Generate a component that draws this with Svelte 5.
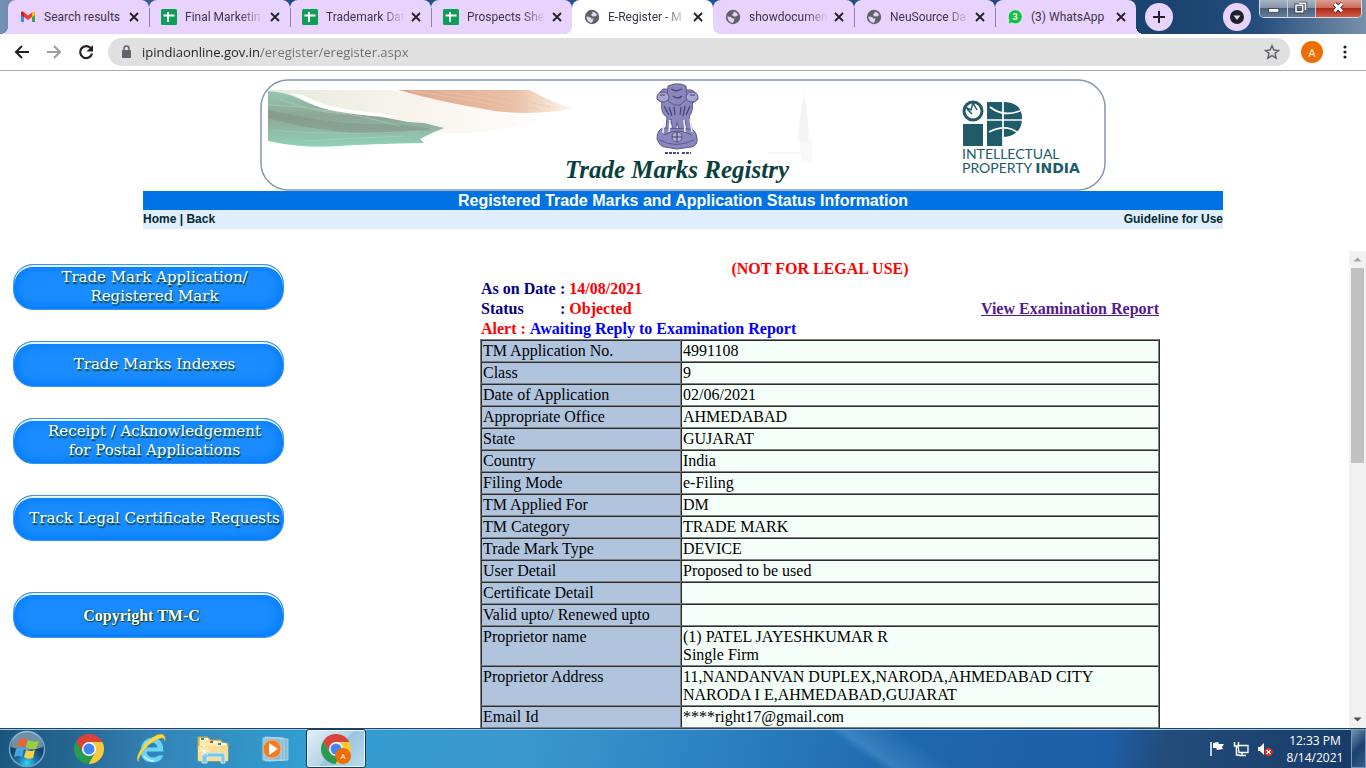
<script>
	const tabs = [
		{ title: 'Search results', icon: 'gmail' },
		{ title: 'Final Marketin', icon: 'sheet', fade: true },
		{ title: 'Trademark Dat', icon: 'sheet', fade: true },
		{ title: 'Prospects She', icon: 'sheet', fade: true },
		{ title: 'E-Register - M', icon: 'globe', fade: true, active: true },
		{ title: 'showdocumen', icon: 'globe', fade: true },
		{ title: 'NeuSource Da', icon: 'globe', fade: true },
		{ title: '(3) WhatsApp', icon: 'whatsapp' }
	];

	const menu = [
		['Trade Mark Application/', 'Registered Mark'],
		['Trade Marks Indexes'],
		['Receipt / Acknowledgement', 'for Postal Applications'],
		['Track Legal Certificate Requests']
	];

	const rows = [
		['TM Application No.', '4991108'],
		['Class', '9'],
		['Date of Application', '02/06/2021'],
		['Appropriate Office', 'AHMEDABAD'],
		['State', 'GUJARAT'],
		['Country', 'India'],
		['Filing Mode', 'e-Filing'],
		['TM Applied For', 'DM'],
		['TM Category', 'TRADE MARK'],
		['Trade Mark Type', 'DEVICE'],
		['User Detail', 'Proposed to be used'],
		['Certificate Detail', ''],
		['Valid upto/ Renewed upto', ''],
		['Proprietor name', '(1) PATEL JAYESHKUMAR R\nSingle Firm'],
		['Proprietor Address', '11,NANDANVAN DUPLEX,NARODA,AHMEDABAD CITY\nNARODA I E,AHMEDABAD,GUJARAT'],
		['Email Id', '****right17@gmail.com']
	];

	let url = 'ipindiaonline.gov.in/eregister/eregister.aspx';
</script>

{#snippet chromeLogo()}
	<path d="M15 8H28.300A15 15 0 0 0 2 7.500L8.900 18.500Z" fill="#d8433a" />
	<path d="M21 18.500L14.500 30A15 15 0 0 0 28.300 8H15Z" fill="#fbc93d" />
	<path d="M8.900 18.500L2 7.500A15 15 0 0 0 14.500 30L21 18.500Z" fill="#2a9a4f" />
	<circle cx="15" cy="15" r="7" fill="#fff" />
	<circle cx="15" cy="15" r="5.500" fill="#4285f4" />
{/snippet}

<div class="screen">
	<header class="tabstrip">
		{#each tabs as tab}
			<div class="tab" class:active={tab.active}>
				<svg class="favicon" viewBox="0 0 16 16">
					{#if tab.icon === 'gmail'}
						<path d="M1 3v10h3V7z" fill="#4285f4" />
						<path d="M15 3v10h-3V7z" fill="#34a853" />
						<path d="M1 4.500Q1 2 3 2.500L8 6.500 12 3.500V8L8 11 1 6z" fill="#ea4335" />
						<path d="M12 3.500Q15 1 15 4.500V6L12 8.200z" fill="#fbbc04" />
						<path d="M1 4.500Q1 3 2.500 2.500L4 4V8.200L1 6z" fill="#c5221f" />
					{:else if tab.icon === 'sheet'}
						<rect width="16" height="16" rx="1.500" fill="#0f9d58" />
						<path d="M7 3v10M2.500 6.500h11" stroke="#fff" stroke-width="2" />
					{:else if tab.icon === 'globe'}
						<circle cx="8" cy="8" r="7.200" fill="#5f6368" />
						<path d="M8.500 2.400Q12 3 13.200 6L11 7.500 8 7.200 7 5.500 8.500 4.500z" fill="#e3d5f2" />
						<path d="M2.300 7.500L6 8l1.500 1.500h2L9 12l-1.500 2Q3 13 2.300 7.500z" fill="#e3d5f2" />
					{:else}
						<path d="M1 15l1-4A7 7 0 1 1 5 14z" fill="#14c143" stroke="#fff" stroke-width=".6" />
						<text x="8" y="11" text-anchor="middle" fill="#fff" font-size="9" font-weight="700">3</text>
					{/if}
				</svg>
				<span class="title" class:fade={tab.fade}>{tab.title}</span>
				<button class="close" aria-label="Close tab">
					<svg viewBox="0 0 10 10"><path d="M1 1l8 8M9 1l-8 8" stroke="#202124" stroke-width="1.800" /></svg>
				</button>
			</div>
		{/each}
		<button class="round" aria-label="New tab">
			<svg viewBox="0 0 28 28"><path d="M14 8v12M8 14h12" stroke="#202124" stroke-width="2" /></svg>
		</button>
		<button class="round search" aria-label="Search tabs">
			<svg viewBox="0 0 28 28"><circle cx="14" cy="14" r="7" fill="#202124" /><path d="M10.500 12.500h7L14 17z" fill="#e8d3ff" /></svg>
		</button>
		<div class="controls">
			<button aria-label="Minimize">
				<svg viewBox="0 0 28 18"><rect x="9" y="9" width="11" height="4" fill="#fff" stroke="#454b57" /></svg>
			</button>
			<button aria-label="Restore">
				<svg viewBox="0 0 28 18"><path d="M11.500 3.500h7v7M8.500 5.500h7v7h-7z" fill="none" stroke="#3b4250" stroke-width="3.500" /><path d="M11.500 3.500h7v7M8.500 5.500h7v7h-7z" fill="none" stroke="#fff" stroke-width="1.700" /></svg>
			</button>
			<button class="exit" aria-label="Close window">
				<svg viewBox="0 0 28 18"><path d="M10 4l8 8M18 4l-8 8" stroke="#60302c" stroke-width="5" /><path d="M10 4l8 8M18 4l-8 8" stroke="#fff" stroke-width="3" /></svg>
			</button>
		</div>
	</header>

	<nav class="toolbar">
		<button class="tool" aria-label="Back">
			<svg viewBox="0 0 20 20"><path d="M17 10H4M10 4l-6 6 6 6" fill="none" stroke="#202124" stroke-width="2" /></svg>
		</button>
		<button class="tool" aria-label="Forward">
			<svg viewBox="0 0 20 20"><path d="M3 10h13M10 4l6 6-6 6" fill="none" stroke="#9b9da0" stroke-width="2" /></svg>
		</button>
		<button class="tool" aria-label="Reload">
			<svg viewBox="0 0 20 20"><path d="M15 6.500A6 6 0 1 0 16 11.500" fill="none" stroke="#202124" stroke-width="2.200" /><path d="M17 3v6.500h-6.500z" fill="#202124" /></svg>
		</button>
		<div class="address">
			<svg class="lock" viewBox="0 0 16 16"><rect x="4" y="6" width="9" height="8" rx="1" fill="#5f6368" /><path d="M6 6V4.500a2.500 2.500 0 0 1 5 0V6" fill="none" stroke="#5f6368" stroke-width="1.500" /></svg>
			<input type="text" aria-label="Address" bind:value={url} />
			<button class="star" aria-label="Bookmark this page">
				<svg viewBox="0 0 16 16"><path d="M8 1.800l1.900 4.300 4.600.400-3.500 3 1.100 4.600L8 11.600l-4.100 2.500L5 9.500l-3.500-3 4.600-.400z" fill="none" stroke="#5f6368" stroke-width="1.500" /></svg>
			</button>
		</div>
		<button class="avatar" aria-label="Profile">A</button>
		<button class="tool dots" aria-label="Menu">
			<svg viewBox="0 0 20 20" fill="#202124"><circle cx="10" cy="5" r="1.600" /><circle cx="10" cy="10" r="1.600" /><circle cx="10" cy="15" r="1.600" /></svg>
		</button>
	</nav>

	<div class="page">
		<div class="masthead">
			<svg class="banner" viewBox="0 0 846 112" role="img" aria-label="Trade Marks Registry, Intellectual Property India">
				<defs>
					<linearGradient id="saffron"><stop offset="0" stop-color="#dda68b" /><stop offset=".65" stop-color="#e9bfa5" /><stop offset="1" stop-color="#fff8ee" /></linearGradient>
					<linearGradient id="cream"><stop offset="0" stop-color="#e6eadd" /><stop offset=".5" stop-color="#f8f4ec" /><stop offset="1" stop-color="#fff" /></linearGradient>
					<linearGradient id="green" x2="0" y2="1"><stop offset="0" stop-color="#93c9b0" /><stop offset=".45" stop-color="#8da595" /><stop offset="1" stop-color="#8fd2b9" /></linearGradient>
				</defs>
				<rect x="1" y="1" width="844" height="110" rx="27" fill="#fff" stroke="#8497b4" stroke-width="1.500" />
				<path d="M8 11H130Q190 24 300 39L240 51Q190 58 165 50L150 45Q70 45 8 12z" fill="url(#cream)" />
				<path d="M138 11H270Q294 25 314 29Q278 37 235 32Q180 23 138 11z" fill="url(#saffron)" />
				<path d="M8 12Q25 13 43 21Q80 35 122 38L148 43 164 44 184 49 172 54 160 60 164 64Q105 65 80 67Q45 70 8 62z" fill="url(#green)" />
				<path d="M8 31Q70 45 110 45T172 50Q120 58 75 52Q40 48 8 39z" fill="#84958b" opacity=".6" />
				<path d="M8 26Q70 28 140 47M12 51Q72 57 160 52M45 62Q95 59 145 57M20 20Q60 35 90 35" fill="none" stroke="#b8d6c7" stroke-width="1.200" opacity=".5" />
				<path d="M43 16Q70 31 120 34L142 38Q90 37 62 29Q46 24 30 14z" fill="#fff" />
				<path d="M150 12Q205 19 248 29M180 12Q230 19 278 30M216 12Q250 18 290 28" fill="none" stroke="#eac8b2" opacity=".7" />

				<g fill="#8b86bb" stroke="#5b568f" stroke-width="1">
					<path d="M403 10Q398 14 397 20l7 5 26 1 8-6q-1-7-7-9z" />
					<path d="M402 21Q400 35 407 38L406 49 402 59 407 57 411 40 414 59 417 43 421 59 425 41 428 58 434 57 429 38Q434 31 432 20z" />
					<path d="M408 7l6-2h7l5 2 1 13-7 6h-6l-7-5z" />
					<ellipse cx="403" cy="18" rx="6" ry="5" fill="#aaa6cb" />
					<ellipse cx="432" cy="18" rx="6" ry="5" fill="#aaa6cb" />
					<path d="M403 49Q397 51 397 60q3 8 8 8l12 2 14-2q7-1 6-9-1-8-7-9z" />
					<path d="M404 56Q417 48 432 56M400 61Q415 70 434 61" fill="none" />
					<circle cx="417" cy="58" r="5" fill="#b6b3d2" />
				</g>
				<path d="M411 10l5 2 6-2M413 17q5 4 9 0M404 27l5 9M409 28l3 9M414 28l1 8M421 28l-1 8M425 27l-2 10M430 27l-4 9M417 53v10M412 58h10M400 16h5M430 16h5" fill="none" stroke="#454078" stroke-width="1.200" />
				<path d="M404 40l-1 14M410 41l-1 12M424 41l1 12M430 40l2 13" stroke="#f3f2fa" stroke-width="1.500" />
				<path d="M405 74h14M422 74h9" stroke="#514c85" stroke-width="2" stroke-dasharray="3 1" />
				<g fill="#f0f0f0" opacity=".7">
					<path d="M541 31l3-18 3 18 2 31h-11z" />
					<path d="M508 73h32V61h12v22h-11v-8h-33z" opacity=".6" />
				</g>
				<text class="registry" x="417" y="99" text-anchor="middle">Trade Marks Registry</text>

				<g fill="#205b69">
					<rect x="703" y="45" width="20" height="22" />
					<path d="M727 23h16q19 0 19 16 0 18-19 19v9h-16z" />
				</g>
				<circle cx="713" cy="32" r="9" fill="#fff" stroke="#205b69" stroke-width="3" />
				<path d="M705 28l6 3 2-7 4 7M707 30l5 5" fill="none" stroke="#205b69" stroke-width="1.500" />
				<path d="M743 23v44M727 41h35M730 28q14 11 32 3M729 53q18-9 30 2" fill="none" stroke="#fff" stroke-width="1.700" />
				<text class="ip" x="702" y="80">INTELLECTUAL</text>
				<text class="ip" x="702" y="94">PROPERTY <tspan class="heavy">INDIA</tspan></text>
			</svg>
			<h1>Registered Trade Marks and Application Status Information</h1>
			<div class="links">
				<span><a href="#home">Home</a> | <a href="#back">Back</a></span>
				<a href="#guide">Guideline for Use</a>
			</div>
		</div>

		<div class="frames">
			<aside>
				{#each menu as lines}
					<button class="pill">
						{#each lines as line}<span>{line}</span>{/each}
					</button>
				{/each}
				<button class="pill copyright">Copyright TM-C</button>
			</aside>

			<main>
				<div class="report">
					<p class="legal">(NOT FOR LEGAL USE)</p>
					<p><span class="key">As on Date</span>: <b>14/08/2021</b></p>
					<p>
						<span class="key">Status</span>: <b>Objected</b>
						<a class="exam" href="#report">View Examination Report</a>
					</p>
					<p class="alert"><b>Alert :</b> Awaiting Reply to Examination Report</p>
					<table>
						<tbody>
							{#each rows as [label, value]}
								<tr>
									<th scope="row">{label}</th>
									<td>{value}</td>
								</tr>
							{/each}
						</tbody>
					</table>
				</div>
			</main>

			<div class="scrollbar">
				<button aria-label="Scroll up"><svg viewBox="0 0 17 17"><path d="M4.500 10.500h8l-4-4z" fill="#a3a3a3" /></svg></button>
				<div class="thumb"></div>
				<button aria-label="Scroll down"><svg viewBox="0 0 17 17"><path d="M4.500 6.500h8l-4 4z" fill="#505050" /></svg></button>
			</div>
		</div>
	</div>

	<footer class="taskbar">
		<button class="orb" aria-label="Start">
			<svg viewBox="0 0 38 38">
				<defs>
					<radialGradient id="orb" cy=".9"><stop offset="0" stop-color="#31d6f5" /><stop offset=".5" stop-color="#1c78ab" /><stop offset="1" stop-color="#194467" /></radialGradient>
				</defs>
				<circle cx="19" cy="19" r="17.500" fill="url(#orb)" stroke="#6fa6c8" stroke-width="1.500" />
				<path d="M3 17A16 16 0 0 1 35 17Q19 23 3 17z" fill="#c9dbe6" opacity=".5" />
				<path d="M11 10q4-3 8-1l-2 8q-4-2-8 0z" fill="#ee6031" />
				<path d="M20 10q5 3 11 1l-3 8q-5 1-10-2z" fill="#9bcf3c" />
				<path d="M8 19q4-2 8 0l-2 8q-4-2-8 0z" fill="#49a6e5" />
				<path d="M18 20q5 2 9 0l-2 8q-5 2-9-1z" fill="#ffd044" />
			</svg>
		</button>
		<button class="task" aria-label="Google Chrome"><svg viewBox="0 0 30 30">{@render chromeLogo()}</svg></button>
		<button class="task" aria-label="Internet Explorer">
			<svg viewBox="0 0 30 30">
				<path d="M28 18H11q1 5 6 5 4 0 5-2h6q-3 8-11 8Q5 29 4 17 5 4 17 3q11 1 11 15zM11 13h10q-1-4-5-4t-5 4z" fill="#74d2f5" stroke="#178fcb" />
				<path d="M7 14Q10 7 17 5M8 22q4 5 10 5" fill="none" stroke="#c9f3ff" stroke-width="1.500" />
				<path d="M3 28q-4-2 1-11Q12 5 21 1q9-3 8 6-1-5-7-2Q12 9 5 20q-4 7-2 8z" fill="#ffdb43" stroke="#d7ae25" stroke-width=".6" />
			</svg>
		</button>
		<button class="task" aria-label="Windows Explorer">
			<svg class="wide" viewBox="0 0 34 30">
				<path d="M2 3h10l2 3h11l2 3h5v18H2z" fill="#e5c56c" stroke="#c29f47" />
				<path d="M4 5h9l2 2h9l2 3h5v17H3z" fill="#fbecae" />
				<path d="M4 5h8M13 8h8M22 10h8" stroke="#fff" stroke-width="2" />
				<path d="M5 5h3" stroke-width="2" stroke="#26a042" />
				<path d="M14 8h3" stroke-width="2" stroke="#d2452f" />
				<path d="M22 10h3" stroke-width="2" stroke="#2f86d6" />
				<path d="M2 12h30v15H2z" fill="#f6df92" />
				<path d="M6 29V22q0-3 3-3h17q3 0 3 3v7h-4v-6H11v6z" fill="#82c6e6" stroke="#c4ecfa" />
				<path d="M8 11v11M2 17h12M4 14l8 7M12 13l-7 8" stroke="#fff" stroke-width=".8" />
			</svg>
		</button>
		<button class="task" aria-label="Windows Media Player">
			<svg viewBox="0 0 30 30">
				<path d="M8 4l20 1v21l-20 1zM5 3l19 1v22l-19 1zM3 4h18v22H3z" fill="#8bbcd7" stroke="#b5d9ea" stroke-width=".8" />
				<circle cx="12" cy="15" r="9" fill="#f47c20" stroke="#f6b17b" />
				<path d="M9 9v12l9-6z" fill="#fff" />
			</svg>
		</button>
		<button class="task current" aria-label="E-Register - Google Chrome">
			<svg viewBox="0 0 30 30">
				{@render chromeLogo()}
				<circle cx="22" cy="22" r="8" fill="#ee6c00" />
				<text x="22" y="25" text-anchor="middle" font-size="8" fill="#fff">A</text>
			</svg>
		</button>
		<div class="tray">
			<svg viewBox="0 0 16 16"><path d="M2 1v14" stroke="#fff" stroke-width="1.500" /><path d="M4 2l5-1 1 2h5l-2 3 1 2-6 1-1-2H4z" fill="#fff" /></svg>
			<svg viewBox="0 0 16 16"><path d="M5 4.500h10v7H6zM9 12v2M6 14.500h7" fill="#244b78" stroke="#fff" stroke-width="1.300" /><path d="M1.500 1v4h4V1M3.500 5v9h3" fill="none" stroke="#fff" stroke-width="1.500" /></svg>
			<svg viewBox="0 0 16 16"><path d="M1 6h2l4-4v12l-4-4H1z" fill="#fff" /><circle cx="11.500" cy="11" r="4.300" fill="#dc2b22" /><path d="M9.500 9l4 4M13.500 9l-4 4" stroke="#fff" stroke-width="1.400" /></svg>
		</div>
		<div class="clock"><span>12:33 PM</span><span>8/14/2021</span></div>
		<button class="peek" aria-label="Show desktop"></button>
	</footer>
</div>

<style>
	:global(body) {
		margin: 0;
		overflow: hidden;
	}
	.screen {
		height: 100vh;
		display: grid;
		grid-template-rows: 34px 37px 1fr 40px;
		grid-template-columns: 100%;
		background: #fff;
		font-family: 'Open Sans', sans-serif;
	}
	button {
		border: 0;
		padding: 0;
		background: none;
		font: inherit;
	}
	svg {
		display: block;
	}
	p,
	h1 {
		margin: 0;
	}

	/* browser tabs */
	.tabstrip {
		display: flex;
		padding: 0 4px 0 8px;
		background: linear-gradient(90deg, #7291b4, #1d4b7d 15%, #20568e 50%, #1a426f 85%, #234d7c 92%, #7890ab);
	}
	.tab {
		--tab: #e8d3ff;
		position: relative;
		flex: 0 1 141px;
		min-width: 0;
		box-sizing: border-box;
		display: flex;
		align-items: center;
		padding: 0 10px 0 12px;
		background: var(--tab);
		border-radius: 8px 8px 0 0;
		font-family: Roboto, sans-serif;
		font-size: 12px;
		color: #3c3547;
	}
	.tab::before,
	.tab::after {
		content: '';
		position: absolute;
		bottom: 0;
		width: 8px;
		height: 8px;
	}
	.tab::before {
		left: -8px;
		background: radial-gradient(circle at 0 0, transparent 8px, var(--tab) 8px);
	}
	.tab::after {
		right: -8px;
		background: radial-gradient(circle at 100% 0, transparent 8px, var(--tab) 8px);
	}
	.tab.active {
		--tab: #fff;
		z-index: 1;
	}
	.tab:not(.active) + .tab:not(.active) {
		background: linear-gradient(#8d8298, #8d8298) 0 8px / 1px 19px no-repeat var(--tab);
	}
	.favicon {
		flex: none;
		width: 16px;
		height: 16px;
	}
	.title {
		flex: 1;
		min-width: 0;
		margin: 0 6px 0 8px;
		overflow: hidden;
		white-space: nowrap;
	}
	.fade {
		mask-image: linear-gradient(90deg, #000 70%, transparent);
	}
	.close {
		flex: none;
		width: 10px;
		height: 10px;
	}
	.round {
		flex: none;
		width: 28px;
		height: 28px;
		margin: 3px 0 0 9px;
		border-radius: 50%;
		background: #e8d3ff;
	}
	.search {
		margin-left: auto;
		margin-right: 8px;
	}
	.controls {
		display: flex;
		height: 18px;
		border: 1px solid #d5dce5;
		border-top: 0;
		border-radius: 0 0 5px 5px;
		overflow: hidden;
		box-sizing: border-box;
	}
	.controls button {
		width: 28px;
		border-right: 1px solid #c4ccd7;
		background: linear-gradient(#a9b4c3, #8794a8 45%, #4a5f7b 50%, #667c98);
	}
	.controls .exit {
		width: 45px;
		border: 0;
		background: linear-gradient(#dba093, #c96b5a 45%, #ac2916 50%, #ce604c);
	}
	.controls svg {
		height: 17px;
		margin: 0 auto;
	}

	/* address bar */
	.toolbar {
		display: flex;
		align-items: center;
		padding: 0 11px 0 12px;
		border-bottom: 1px solid #a9a9a9;
	}
	.tool {
		width: 20px;
		height: 20px;
		margin-right: 12px;
	}
	.address {
		flex: 1;
		height: 28px;
		display: flex;
		align-items: center;
		padding: 0 10px;
		border-radius: 14px;
		background: #e0e0e0;
	}
	.lock {
		width: 16px;
		height: 16px;
	}
	.address input {
		flex: 1;
		min-width: 0;
		height: 24px;
		margin-left: 8px;
		padding: 0;
		border: 0;
		outline: 0;
		font: 13px 'Open Sans', sans-serif;
		color: transparent;
		caret-color: #202124;
		/* host name dark, path grey */
		background: linear-gradient(90deg, #202124 119px, #6a6d71 119px);
		background-clip: text;
	}
	.star {
		width: 16px;
		height: 16px;
	}
	.avatar {
		width: 22px;
		height: 22px;
		margin: 0 12px 0 11px;
		border-radius: 50%;
		background: #ee6c00;
		color: #fff;
		font-size: 11px;
	}
	.dots {
		margin: 0;
	}

	/* registry page */
	.page {
		display: flex;
		flex-direction: column;
		min-height: 0;
		background: #fff;
	}
	.masthead {
		width: 80%;
		max-width: 1080px;
		margin: 8px auto 22px;
		font-family: 'Liberation Sans', sans-serif;
	}
	.banner {
		width: 846px;
		max-width: 100%;
		margin: 0 auto;
	}
	.registry {
		font: italic 700 25px 'Liberation Serif', serif;
		fill: #09403e;
	}
	.ip {
		font: 14px Lato, sans-serif;
		fill: #205b69;
	}
	.heavy {
		font: 700 14px 'DejaVu Sans', sans-serif;
	}
	h1 {
		background: #0072e3;
		color: #fff;
		font-size: 16px;
		line-height: 19px;
		text-align: center;
	}
	.links {
		display: flex;
		justify-content: space-between;
		background: #deeeff;
		font-size: 12px;
		font-weight: 700;
		line-height: 19px;
		color: #032b2d;
	}
	.links a {
		color: inherit;
		text-decoration: none;
	}
	.frames {
		flex: 1;
		min-height: 0;
		display: flex;
	}
	aside {
		flex: none;
		width: 291px;
		box-sizing: border-box;
		padding: 13px 7px 0 13px;
		display: flex;
		flex-direction: column;
		gap: 31px;
	}
	.pill {
		flex: none;
		height: 46px;
		display: flex;
		flex-direction: column;
		align-items: center;
		justify-content: center;
		padding-left: 12px;
		border: 1px solid #3d94e8;
		border-radius: 20px;
		background: #1a8cff;
		box-shadow:
			inset 0 2px 0 #e4f4ff,
			inset 0 0 10px 3px #007bff;
		color: #fff;
		font: 15px/19px 'DejaVu Serif', serif;
		text-shadow: 1px 2px 1px #064226;
		white-space: nowrap;
	}
	.copyright {
		margin-top: 20px;
		padding: 0 14px 0 0;
		font: 700 16px/19px 'Liberation Serif', serif;
		text-shadow: 0 0 2px #064226, 1px 1px 1px #064226;
	}
	main {
		flex: 1;
		min-width: 0;
		overflow: hidden;
		padding-top: 8px;
		font: 16px/20px 'Liberation Serif', serif;
	}
	.report {
		width: 680px;
		max-width: 100%;
		margin: 0 auto;
	}
	.report p {
		display: flex;
		gap: 4px;
		padding: 0 1px;
		font-weight: 700;
		color: #000080;
	}
	.report b {
		color: #f00;
	}
	.report .legal {
		justify-content: center;
		color: #f00;
	}
	.report .alert {
		color: #00f;
	}
	.key {
		width: 75px;
	}
	.exam {
		margin-left: auto;
		color: #551a8b;
	}
	table {
		width: 100%;
		border-spacing: 0;
		border: 1px solid #808080;
		border-right-color: #2c2c2c;
		line-height: 18px;
	}
	th,
	td {
		padding: 1px;
		border-top: 1px solid #2c2c2c;
		border-bottom: 1px solid #808080;
		border-left: 1px solid #2c2c2c;
		vertical-align: top;
		text-align: left;
		font-weight: 400;
		white-space: pre-line;
	}
	th {
		width: 196px;
		background: #b0c4de;
		border-right: 1px solid #808080;
	}
	td {
		height: 18px;
		background: #f5fffa;
		border-right: 1px solid #808080;
	}
	.scrollbar {
		flex: none;
		width: 17px;
		display: grid;
		grid-template-rows: 17px 1fr 17px;
		background: #f1f1f1;
	}
	.thumb {
		height: 44%;
		margin: 0 2px;
		background: #c1c1c1;
	}

	/* windows taskbar */
	.taskbar {
		display: flex;
		box-sizing: border-box;
		border-top: 1px solid #21435f;
		box-shadow: inset 0 1px 0 #9cc9e6;
		background:
			linear-gradient(35deg, transparent 62%, #4c94cc88 63%, transparent 67%),
			linear-gradient(100deg, #1c567f 0, #24658f 5%, #3485b8 12%, #319dd0 22%, #3b98cf 38%, #2d82c1 52%, #1e68ad 66%, #1d5fa6 81%, #234c7c 85%, #173a66);
	}
	.orb {
		width: 58px;
		padding-left: 8px;
	}
	.orb svg {
		width: 38px;
		height: 38px;
	}
	.task {
		width: 62px;
		display: grid;
		place-items: center;
	}
	.task svg {
		width: 30px;
		height: 30px;
	}
	.task .wide {
		width: 34px;
	}
	.current {
		width: 60px;
		box-sizing: border-box;
		border: 1px solid #173d5b;
		border-radius: 3px;
		background: linear-gradient(135deg, #e5f1f8, #b4d3e6 50%, #9ac5df 51%, #b9dcee);
		box-shadow: inset 0 0 0 1px #e9f8ff;
	}
	.tray {
		margin: 0 6px 0 auto;
		display: flex;
		align-items: center;
		gap: 8px;
	}
	.tray svg {
		width: 16px;
		height: 16px;
	}
	.clock {
		width: 72px;
		display: flex;
		flex-direction: column;
		justify-content: center;
		text-align: center;
		color: #fff;
		font-size: 12px;
		line-height: 17px;
	}
	.peek {
		width: 15px;
		border: 1px solid #7997b4;
		background: linear-gradient(135deg, #7193b5, #1b406c 50%, #315d8b);
	}
</style>
